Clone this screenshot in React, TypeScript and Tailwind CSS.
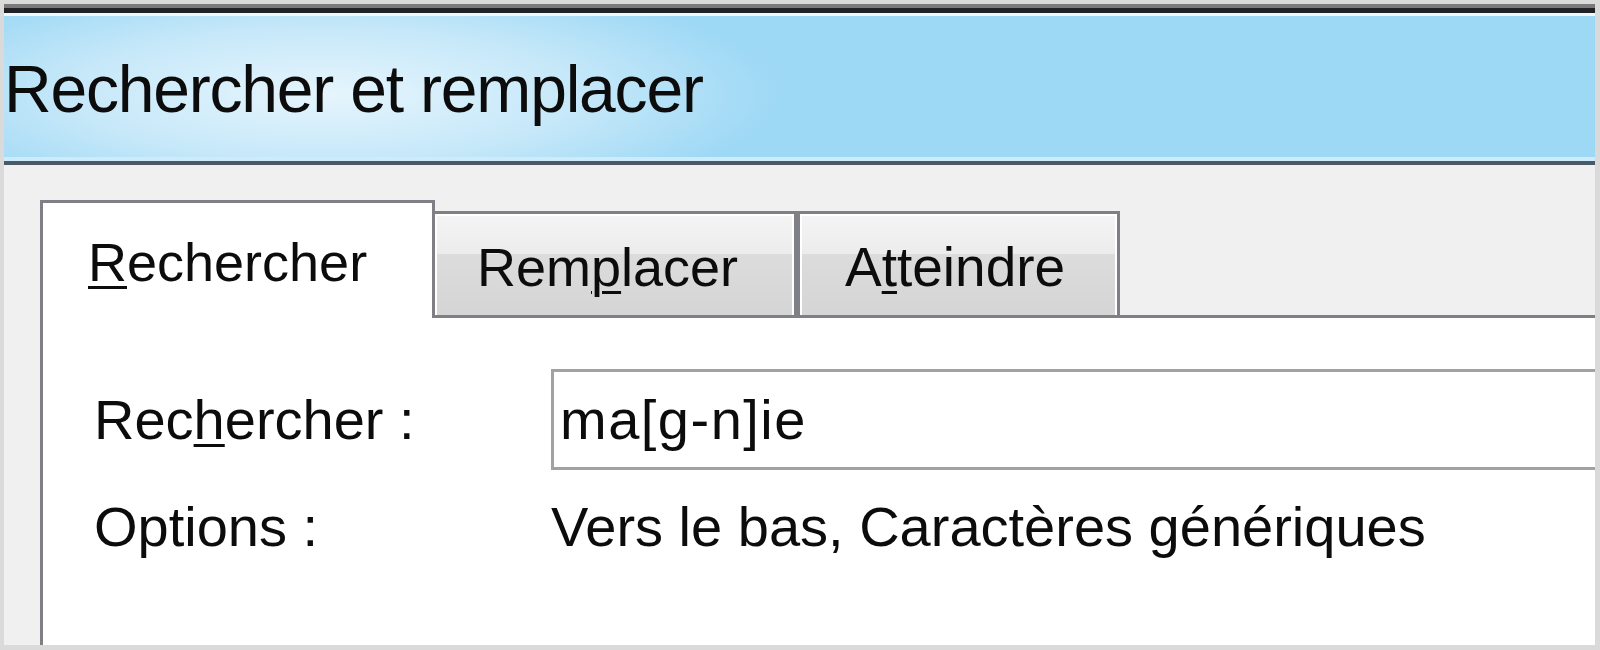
import React from "react"

const tabBorder = "border-[#7f7f86]"

function Key({ children }: { children: React.ReactNode }) {
  return <span className="underline decoration-[3px] underline-offset-[5px]">{children}</span>
}

export default function App() {
  return (
    <div className="w-[1600px] h-[650px] overflow-hidden bg-[#dadada] pt-[4px] pl-[4px] pr-[5px] pb-[5px] font-['Liberation_Sans',Arial,sans-serif] text-[#0c0c0c]">
      <div className="flex h-full flex-col bg-[#f0f0f0]">
        {/* barre de titre */}
        <div className="h-[4px] bg-[#7a7a7a]" />
        <div className="h-[5px] bg-[#202226]" />
        <div className="h-[3px] bg-[#eef9fe]" />
        <div className="h-[141px] bg-[#9dd8f5] bg-[radial-gradient(ellipse_460px_120px_at_320px_78px,#e6f5fd_0%,#c6e8f9_55%,#9dd8f5_100%)] pt-[41px] text-[66px] leading-[64px] tracking-[-1.2px] whitespace-nowrap">
          Rechercher et remplacer
        </div>
        <div className="h-[4px] bg-[#cdecfb]" />
        <div className="h-[4px] bg-[#4c5864]" />

        <div className="flex flex-1 flex-col pl-[36px] pt-[35px]">
          {/* onglets */}
          <div className="flex h-[118px] items-end">
            <div className={`h-[118px] w-[395px] shrink-0 border-l-[3px] border-r-[3px] border-t-[3px] ${tabBorder} bg-white pl-[45px] pt-[32px] text-[54px] leading-[54px] whitespace-nowrap`}>
              <Key>R</Key>echercher
            </div>
            <div className={`h-[107px] w-[362px] shrink-0 border-b-[3px] border-r-[3px] border-t-[3px] ${tabBorder} bg-[linear-gradient(#f4f4f4_0%,#ececec_40%,#dcdcdc_40%,#d5d5d5_100%)] shadow-[inset_2px_2px_0_#fff,inset_-2px_0_0_#fff] pl-[42px] pt-[26px] text-[54px] leading-[54px] whitespace-nowrap`}>
              Rem<Key>p</Key>lacer
            </div>
            <div className={`h-[107px] w-[323px] shrink-0 border-[3px] ${tabBorder} bg-[linear-gradient(#f4f4f4_0%,#ececec_40%,#dcdcdc_40%,#d5d5d5_100%)] shadow-[inset_2px_2px_0_#fff,inset_-2px_0_0_#fff] pl-[45px] pt-[26px] text-[55px] leading-[54px] whitespace-nowrap`}>
              A<Key>t</Key>teindre
            </div>
            <div className="h-[3px] flex-1 bg-[#7f7f86]" />
          </div>

          {/* contenu de l'onglet */}
          <div className={`flex-1 overflow-hidden border-l-[3px] ${tabBorder} bg-white pl-[51px] pt-[51px] text-[56px] leading-[56px]`}>
            <div className="flex items-center">
              <div className="w-[457px] shrink-0 whitespace-nowrap">
                Rec<Key>h</Key>ercher :
              </div>
              <div className="flex h-[101px] flex-1 items-center border-y-[3px] border-l-[3px] border-[#a2a2a2] pl-[6px] tracking-[1.5px] whitespace-nowrap">
                ma[g-n]ie
              </div>
            </div>
            <div className="mt-[29px] flex">
              <div className="w-[457px] shrink-0 whitespace-nowrap">Options :</div>
              <div className="whitespace-nowrap">Vers le bas, Caractères génériques</div>
            </div>
          </div>
        </div>
      </div>
    </div>
  )
}
